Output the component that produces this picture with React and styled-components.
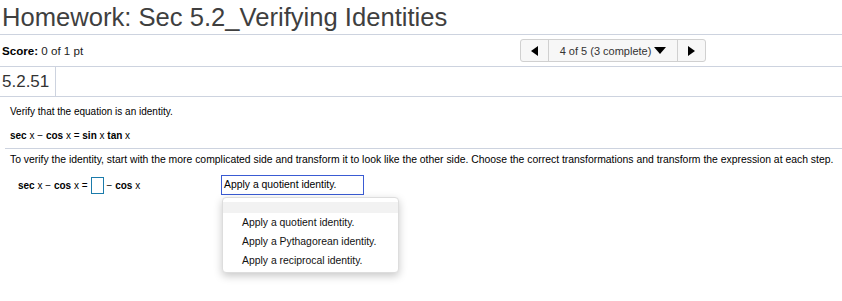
import React from "react";
import styled, { createGlobalStyle } from "styled-components";

const GlobalStyle = createGlobalStyle`
  html, body {
    margin: 0;
    padding: 0;
    background: #fff;
    font-family: "Liberation Sans", Arial, sans-serif;
    color: #000;
  }
`;

const Page = styled.div`
  width: 842px;
  height: 301px;
  overflow: hidden;
`;

const Title = styled.h1`
  margin: 0;
  height: 35px;
  padding: 3px 0 0 2px;
  box-sizing: border-box;
  font-size: 25.6px;
  font-weight: normal;
  color: #3f3f3f;
  border-bottom: 1px solid #cdd3df;
  line-height: 28px;
`;

const ScoreBar = styled.div`
  display: flex;
  align-items: center;
  height: 31px;
  padding-left: 2px;
  border-bottom: 1px solid #cdd3df;
  font-size: 11.6px;
  color: #222;
  b {
    color: #000;
  }
`;

const ScoreText = styled.div`
  width: 518px;
`;

const Nav = styled.div`
  display: flex;
  height: 23px;
  box-sizing: border-box;
  border: 1px solid #d0d0d0;
  border-radius: 3px;
  background: #f7f7f7;
`;

const NavBtn = styled.div`
  display: flex;
  align-items: center;
  justify-content: center;
  width: ${(p) => p.$w}px;
  border-left: ${(p) => (p.$sep ? "1px solid #d0d0d0" : "none")};
  font-size: 11px;
  color: #333;
  gap: 3px;
`;

const NumberBar = styled.div`
  display: flex;
  height: 29px;
  border-bottom: 1px solid #cdd3df;
`;

const ProblemNo = styled.div`
  width: 53px;
  padding-left: 2px;
  border-right: 1px solid #cdd3df;
  font-size: 17px;
  color: #333;
  line-height: 29px;
`;

const Question = styled.div`
  padding: 9px 0 0 10px;
  font-size: 10px;
  line-height: 12px;
`;

const Equation = styled.div`
  margin-top: 12px;
  font-size: 10px;
  b {
    font-weight: bold;
  }
`;

const Divider = styled.div`
  margin: 6px 0 0 5px;
  border-top: 1px solid #cdd3df;
`;

const Instructions = styled.div`
  padding: 5px 0 0 10px;
  font-size: 10.4px;
  line-height: 12px;
`;

const WorkRow = styled.div`
  display: flex;
  align-items: center;
  margin-top: 9px;
  padding-left: 18px;
  font-size: 10px;
  gap: 3px;
`;

const AnswerBox = styled.span`
  display: inline-block;
  width: 11px;
  height: 15px;
  border: 1.5px solid #1b7bab;
`;

const LeftPart = styled.div`
  display: flex;
  align-items: center;
  gap: 3px;
  width: 200px;
`;

const SelectWrap = styled.div`
  position: relative;
`;

const Select = styled.div`
  width: 143px;
  height: 20px;
  box-sizing: border-box;
  border: 1.5px solid #3a5bd3;
  padding-left: 2px;
  font-size: 10.4px;
  line-height: 17px;
`;

const Menu = styled.div`
  position: absolute;
  left: 1px;
  top: 22px;
  width: 177px;
  height: 76px;
  box-sizing: border-box;
  background: #fff;
  border: 1px solid #ddd;
  border-radius: 4px;
  box-shadow: 0 3px 8px rgba(0, 0, 0, 0.22);
  padding-top: 4px;
`;

const MenuItem = styled.div`
  height: ${(p) => (p.$blank ? 11 : 19)}px;
  background: ${(p) => (p.$blank ? "#f2f2f2" : "transparent")};
  padding-left: 19px;
  font-size: 10.4px;
  line-height: 19px;
  color: #111;
`;

const Tri = ({ dir }) => {
  const pts = {
    left: "8,1 8,11 1,6",
    right: "1,1 1,11 8,6",
    down: "0,2 12,2 6,9",
  };
  return (
    <svg width={dir === "down" ? 12 : 9} height="12" viewBox={dir === "down" ? "0 0 12 12" : "0 0 9 12"}>
      <polygon points={pts[dir]} fill="#000" />
    </svg>
  );
};

export default function App() {
  return (
    <Page>
      <GlobalStyle />
      <Title>Homework: Sec 5.2_Verifying Identities</Title>
      <ScoreBar>
        <ScoreText>
          <b>Score:</b> 0 of 1 pt
        </ScoreText>
        <Nav>
          <NavBtn $w={27}>
            <Tri dir="left" />
          </NavBtn>
          <NavBtn $w={128} $sep>
            4 of 5 (3 complete) <Tri dir="down" />
          </NavBtn>
          <NavBtn $w={27} $sep>
            <Tri dir="right" />
          </NavBtn>
        </Nav>
      </ScoreBar>
      <NumberBar>
        <ProblemNo>5.2.51</ProblemNo>
      </NumberBar>
      <Question>
        Verify that the equation is an identity.
        <Equation>
          <b>sec</b> x − <b>cos</b> x = <b>sin</b> x <b>tan</b> x
        </Equation>
      </Question>
      <Divider />
      <Instructions>
        To verify the identity, start with the more complicated side and transform it to look like the other side. Choose the correct transformations and transform the expression at each step.
      </Instructions>
      <WorkRow>
        <LeftPart>
          <span>
            <b>sec</b> x − <b>cos</b> x =
          </span>
          <AnswerBox />
          <span>
            − <b>cos</b> x
          </span>
        </LeftPart>
        <SelectWrap>
          <Select>Apply a quotient identity.</Select>
          <Menu>
            <MenuItem $blank />
            <MenuItem>Apply a quotient identity.</MenuItem>
            <MenuItem>Apply a Pythagorean identity.</MenuItem>
            <MenuItem>Apply a reciprocal identity.</MenuItem>
          </Menu>
        </SelectWrap>
      </WorkRow>
    </Page>
  );
}
